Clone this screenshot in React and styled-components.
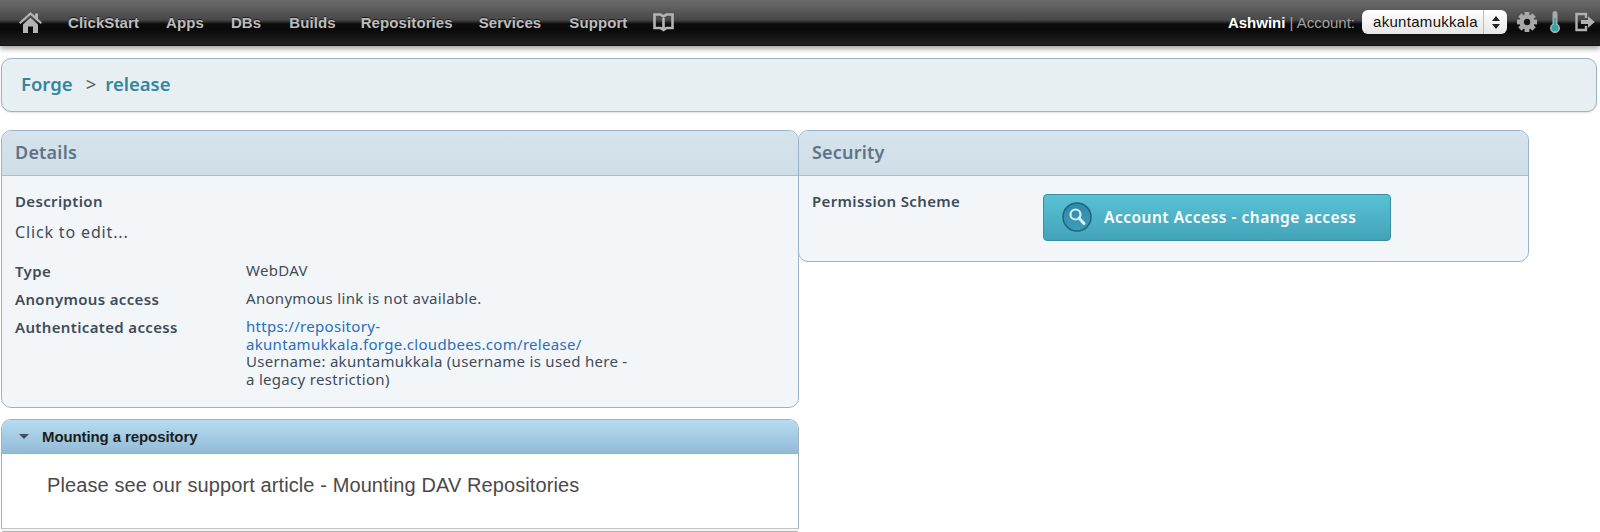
import React from 'react'
import styled, { createGlobalStyle } from 'styled-components'

const sans = `"Noto Sans", "Open Sans", sans-serif`
const arial = `"Liberation Sans", Arial, sans-serif`

const GlobalStyle = createGlobalStyle`
  html, body {
    margin: 0;
    padding: 0;
    background: #fff;
    height: 532px;
    overflow: hidden;
  }
  * { box-sizing: border-box; }
`

const Page = styled.div`
  width: 1600px;
  height: 532px;
  overflow: hidden;
  font-family: ${sans};
`

const TopBar = styled.header`
  height: 46px;
  padding: 0 5px 2px 19px;
  display: flex;
  align-items: center;
  justify-content: space-between;
  background: linear-gradient(to bottom, #6a6a6a 0, #5e5e5e 8px, #474747 20px, #0c0c0c 24px, #0a0a0a 30px, #222 45px, #000 46px);
  box-shadow: 0 3px 5px rgba(0, 0, 0, 0.35);
`

const NavList = styled.nav`
  display: flex;
  align-items: center;
`

const NavItem = styled.a`
  margin-left: ${p => p.$gap}px;
  font: bold 15px ${arial};
  letter-spacing: 0.1px;
  color: #bdbdbd;
  text-shadow: 0 -1px 0 rgba(0, 0, 0, 0.6);
`

const IconSlot = styled.span`
  display: flex;
  align-items: center;
  margin-left: ${p => p.$gap || 0}px;
`

const AccountArea = styled.div`
  display: flex;
  align-items: center;
`

const UserName = styled.span`
  font: bold 15px ${arial};
  color: #fff;
`

const AccountLabel = styled.span`
  margin-left: 4px;
  font: 15px ${arial};
  color: #a2a2a2;
`

const AccountSelect = styled.div`
  width: 145px;
  height: 24px;
  margin-left: 7px;
  display: flex;
  border-radius: 6px;
  overflow: hidden;
  background: linear-gradient(to bottom, #fff, #e6e6e6);
  font: 15px ${arial};
  letter-spacing: 0.3px;
  color: #111;
`

const SelectValue = styled.span`
  flex: 1;
  padding-left: 11px;
  line-height: 23px;
`

const SelectArrows = styled.span`
  width: 24px;
  border-left: 1px solid #bdbdbd;
  display: flex;
  align-items: center;
  justify-content: center;
`

const Crumbs = styled.div`
  height: 54px;
  margin: 12px 3px 0 1px;
  padding: 0 0 4px 19px;
  display: flex;
  align-items: center;
  border: 1px solid #9cb3c7;
  border-radius: 10px;
  background: #e8eff3;
  box-shadow: 0 1px 2px rgba(0, 0, 0, 0.12);
  font-size: 18.5px;
`

const CrumbLink = styled.a`
  color: #34869c;
  font-weight: 600;
`

const CrumbSep = styled.span`
  margin: 0 9px 0 13px;
  color: #4a5866;
`

const Columns = styled.div`
  display: flex;
  align-items: flex-start;
  margin: 18px 0 0 1px;
`

const LeftColumn = styled.div`
  width: 798px;
  display: flex;
  flex-direction: column;
  gap: 11px;
`

const Panel = styled.section`
  width: ${p => p.$width}px;
  margin-left: ${p => p.$overlap || 0}px;
  border: 1px solid #9cb3c7;
  border-radius: 10px;
  background: #f2f6f9;
  overflow: hidden;
`

const PanelHeader = styled.h2`
  height: 45px;
  margin: 0;
  padding: 0 0 2px 13px;
  display: flex;
  align-items: center;
  background: linear-gradient(to bottom, #d6e3ec, #cfdee7);
  border-bottom: 1px solid #a9bfd0;
  font-size: 18px;
  font-weight: 600;
  letter-spacing: 0.2px;
  color: #5f7488;
`

const DetailsBody = styled.div`
  padding: 16px 13px 19px;
  font-size: 15px;
  line-height: 18px;
  color: #3f4c59;
`

const FieldLabel = styled.div`
  font-size: 15px;
  font-weight: 600;
  letter-spacing: 0.35px;
  color: #3f4c59;
`

const EditHint = styled.div`
  margin: 12px 0 20px;
  font-size: 16px;
  line-height: 20px;
  letter-spacing: 0.85px;
`

const FieldGrid = styled.div`
  display: grid;
  grid-template-columns: 231px 395px;
  row-gap: 10px;
`

const FieldValue = styled.div`
  line-height: 17.5px;
  letter-spacing: 0.3px;
`

const ValueLink = styled.a`
  color: #2a6ebb;
`

const SecurityBody = styled.div`
  height: 85px;
  padding: 16px 13px 20px;
  display: grid;
  grid-template-columns: 231px 348px;
  line-height: 18px;
`

const ActionButton = styled.a`
  height: 47px;
  margin-top: 2px;
  padding: 0 0 2px 18px;
  display: flex;
  align-items: center;
  gap: 12px;
  border: 1px solid #3a8ea3;
  border-radius: 4px;
  background: linear-gradient(to bottom, #5ac2d6, #42a3b8);
  font-size: 15.5px;
  font-weight: 600;
  letter-spacing: 0.5px;
  color: #fff;
`

const Accordion = styled.section`
  border: 1px solid #9cb3c7;
  border-bottom: 0;
  border-radius: 10px 10px 0 0;
  background: #fff;
`

const AccordionHeader = styled.h3`
  height: 34px;
  margin: 0;
  padding-left: 17px;
  display: flex;
  align-items: center;
  gap: 13px;
  border-radius: 9px 9px 0 0;
  background: linear-gradient(to bottom, #b7dcf1, #92bbd6);
  border-bottom: 1px solid #8fb2cb;
  font: bold 15px ${arial};
  letter-spacing: -0.1px;
  color: #1d1d1d;
`

const Caret = styled.span`
  width: 0;
  height: 0;
  border-left: 5px solid transparent;
  border-right: 5px solid transparent;
  border-top: 5px solid #444f59;
`

const AccordionBody = styled.div`
  height: 75px;
  padding: 19px 0 0 45px;
  border-bottom: 1px solid #c4c4c4;
  box-shadow: 0 2px 0 #f4f4f4, 0 4px 0 #b5b5b5;
  font: 20px ${arial};
  line-height: 24px;
  letter-spacing: 0.1px;
  color: #4a4a4a;
`

const HomeIcon = () => (
  <svg width="23" height="21" viewBox="0 0 23 21">
    <path d="M11.5 0 L16 4 V1.5 H19 V6.8 L23 10.4 L21.6 12 L11.5 3 L1.4 12 L0 10.4 Z M4 12.5 L11.5 5.8 L19 12.5 V21 H14 V14.5 H9 V21 H4 Z" fill="#b4b4b4" />
  </svg>
)

const BookIcon = () => (
  <svg width="21" height="19" viewBox="0 0 21 19" fill="none" stroke="#b4b4b4" strokeWidth="2.6" strokeLinejoin="miter">
    <path d="M1.5 1.5 H7.5 L10.5 3.4 L13.5 1.5 H19.5 V15 H13.5 L10.5 17 L7.5 15 H1.5 Z M10.5 3.4 V17" />
  </svg>
)

const GearIcon = () => (
  <svg width="22" height="22" viewBox="0 0 22 22">
    <g fill="#a8a8a8">
      <circle cx="11" cy="11" r="7.4" />
      {[0, 45, 90, 135, 180, 225, 270, 315].map(a => (
        <rect key={a} x="8.6" y="1" width="4.8" height="5" transform={`rotate(${a} 11 11)`} />
      ))}
    </g>
    <circle cx="11" cy="11" r="3.2" fill="#151515" />
  </svg>
)

const ThermometerIcon = () => (
  <svg width="14" height="22" viewBox="0 0 14 22">
    <path d="M4.5 2.5 a2.5 2.5 0 0 1 5 0 V12.8 a5 5 0 1 1 -5 0 Z" fill="#a9a9a9" />
    <rect x="6" y="7" width="2" height="8" fill="#2fa7a5" />
    <circle cx="7" cy="17" r="3.3" fill="#2fa7a5" />
  </svg>
)

const LogoutIcon = () => (
  <svg width="20" height="20" viewBox="0 0 20 20" fill="none">
    <path d="M11 6 V2 H1.5 V18 H11 V14" stroke="#b0b0b0" strokeWidth="2.4" />
    <path d="M6 8 H13 V4.2 L19.8 10 L13 15.8 V12 H6 Z" fill="#b0b0b0" />
  </svg>
)

const SelectArrowIcon = () => (
  <svg width="8" height="13" viewBox="0 0 8 13">
    <path d="M4 0 L8 5 H0 Z M4 13 L0 8 H8 Z" fill="#222" />
  </svg>
)

const SearchBadge = () => (
  <svg width="30" height="30" viewBox="0 0 30 30">
    <defs>
      <linearGradient id="badge" x1="0" y1="0" x2="0" y2="1">
        <stop offset="0" stopColor="#2f8aa8" />
        <stop offset="1" stopColor="#3f9cb8" />
      </linearGradient>
    </defs>
    <circle cx="15" cy="15" r="14" fill="url(#badge)" stroke="#1f6480" strokeWidth="1.5" />
    <circle cx="13.5" cy="12.5" r="5" fill="none" stroke="#d4f0f6" strokeWidth="2.2" />
    <path d="M17 16 L22 21.5" stroke="#d4f0f6" strokeWidth="3" strokeLinecap="round" />
  </svg>
)

const navLinks = [
  ['ClickStart', 26],
  ['Apps', 27],
  ['DBs', 27],
  ['Builds', 28],
  ['Repositories', 25],
  ['Services', 26],
  ['Support', 28],
]

const App = () => (
  <Page>
    <GlobalStyle />
    <TopBar>
      <NavList>
        <HomeIcon />
        {navLinks.map(([label, gap]) => (
          <NavItem key={label} $gap={gap}>{label}</NavItem>
        ))}
        <IconSlot $gap={26}><BookIcon /></IconSlot>
      </NavList>
      <AccountArea>
        <UserName>Ashwini</UserName>
        <AccountLabel>| Account:</AccountLabel>
        <AccountSelect>
          <SelectValue>akuntamukkala</SelectValue>
          <SelectArrows><SelectArrowIcon /></SelectArrows>
        </AccountSelect>
        <IconSlot $gap={9}><GearIcon /></IconSlot>
        <IconSlot $gap={10}><ThermometerIcon /></IconSlot>
        <IconSlot $gap={13}><LogoutIcon /></IconSlot>
      </AccountArea>
    </TopBar>
    <Crumbs>
      <CrumbLink>Forge</CrumbLink>
      <CrumbSep>&gt;</CrumbSep>
      <CrumbLink>release</CrumbLink>
    </Crumbs>
    <Columns>
      <LeftColumn>
        <Panel $width={798}>
          <PanelHeader>Details</PanelHeader>
          <DetailsBody>
            <FieldLabel>Description</FieldLabel>
            <EditHint>Click to edit...</EditHint>
            <FieldGrid>
              <FieldLabel>Type</FieldLabel>
              <FieldValue>WebDAV</FieldValue>
              <FieldLabel>Anonymous access</FieldLabel>
              <FieldValue>Anonymous link is not available.</FieldValue>
              <FieldLabel>Authenticated access</FieldLabel>
              <FieldValue>
                <ValueLink>https://repository-<br />akuntamukkala.forge.cloudbees.com/release/</ValueLink>
                <br />
                Username: akuntamukkala (username is used here -<br />a legacy restriction)
              </FieldValue>
            </FieldGrid>
          </DetailsBody>
        </Panel>
        <Accordion>
          <AccordionHeader><Caret />Mounting a repository</AccordionHeader>
          <AccordionBody>Please see our support article - Mounting DAV Repositories</AccordionBody>
        </Accordion>
      </LeftColumn>
      <Panel $width={731} $overlap={-1}>
        <PanelHeader>Security</PanelHeader>
        <SecurityBody>
          <FieldLabel>Permission Scheme</FieldLabel>
          <ActionButton><SearchBadge />Account Access - change access</ActionButton>
        </SecurityBody>
      </Panel>
    </Columns>
  </Page>
)

export default App
